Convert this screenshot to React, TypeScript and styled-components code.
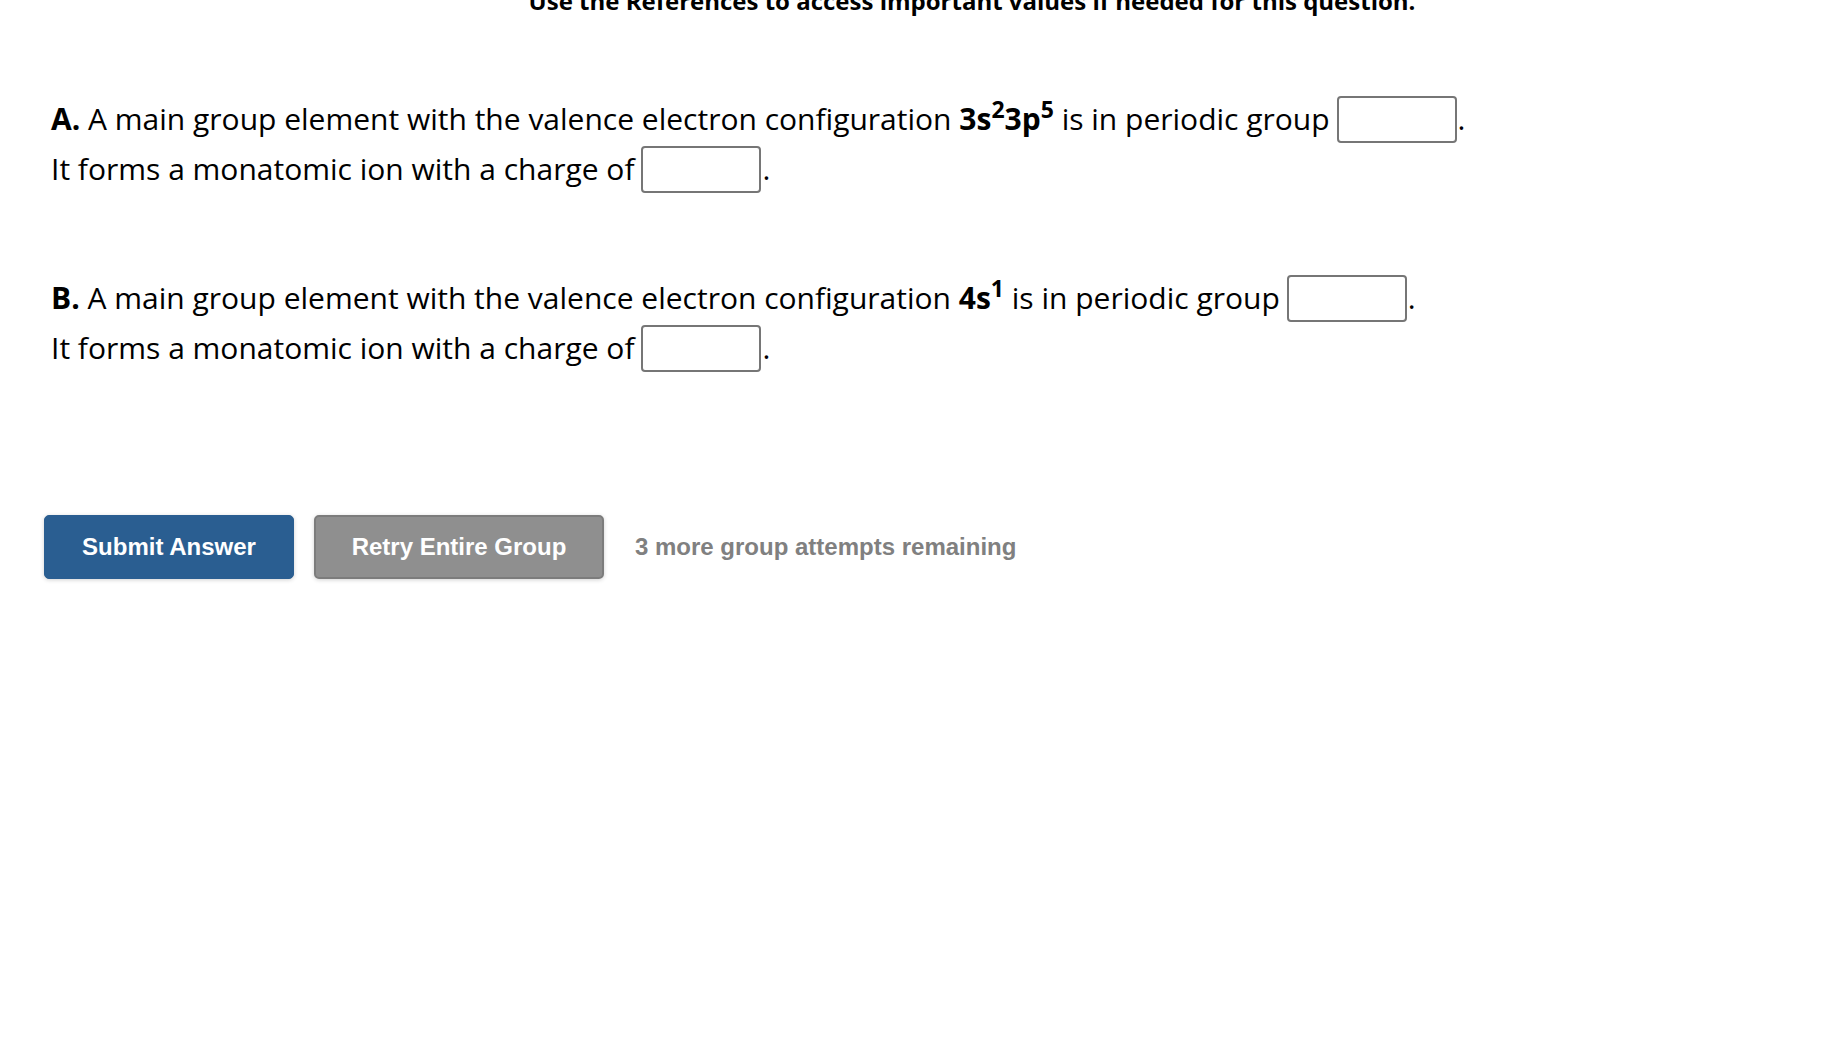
import styled, { createGlobalStyle } from "styled-components";

const GlobalStyle = createGlobalStyle`
  html, body {
    margin: 0;
    padding: 0;
    background: #ffffff;
  }
  body {
    font-family: "Open Sans", "Liberation Sans", sans-serif;
    color: #000000;
    overflow: hidden;
  }
`;

const Page = styled.div`
  width: 1842px;
  height: 1046px;
  overflow: hidden;
`;

const Notice = styled.div`
  margin: -14px 0 0 0;
  padding-left: 102px;
  text-align: center;
  font-weight: 700;
  font-size: 24px;
  line-height: 30px;
`;

const Question = styled.p<{ $gap: number }>`
  margin: ${(p) => p.$gap}px 0 0 0;
  padding-left: 51px;
  font-size: 30px;
  line-height: 50px;
`;

const Label = styled.b`
  font-weight: 700;
`;

const Formula = styled.b`
  font-weight: 700;
`;

const Sup = styled.sup`
  font-size: 23px;
  line-height: 0;
  vertical-align: 12px;
`;

const Blank = styled.input.attrs({ type: "text" })`
  display: inline-block;
  box-sizing: border-box;
  width: 120px;
  height: 47px;
  margin: -5px 1px 0 7px;
  padding: 0 8px;
  border: 2px solid #767676;
  border-radius: 4px;
  background: #ffffff;
  vertical-align: middle;
  font-size: 24px;
  outline: none;
`;

const Actions = styled.div`
  display: flex;
  align-items: center;
  gap: 20px;
  margin-top: 142px;
  padding-left: 44px;
`;

const Button = styled.button<{ $tone: "primary" | "muted" }>`
  box-sizing: border-box;
  height: 64px;
  padding: 0;
  width: ${(p) => (p.$tone === "primary" ? 250 : 290)}px;
  border-radius: 5px;
  border: ${(p) =>
    p.$tone === "primary" ? "1px solid #2a5e91" : "2px solid #7c7c7c"};
  background: ${(p) => (p.$tone === "primary" ? "#2a5e91" : "#8f8f8f")};
  color: #ffffff;
  font-family: "Liberation Sans", Arial, sans-serif;
  font-weight: 700;
  font-size: 24px;
  box-shadow: 0 1px 4px rgba(0, 0, 0, 0.18);
  cursor: pointer;
`;

const Attempts = styled.span`
  margin-left: 11px;
  font-family: "Liberation Sans", Arial, sans-serif;
  font-weight: 700;
  font-size: 24px;
  color: #808080;
`;

export default function App() {
  return (
    <Page>
      <GlobalStyle />
      <Notice>
        Use the References to access important values if needed for this
        question.
      </Notice>

      <Question $gap={78}>
        <Label>A.</Label> A main group element with the valence electron
        configuration{" "}
        <Formula>
          3s<Sup>2</Sup>3p<Sup>5</Sup>
        </Formula>{" "}
        is in periodic group
        <Blank />.
        <br />
        It forms a monatomic ion with a charge of
        <Blank />.
      </Question>

      <Question $gap={79}>
        <Label>B.</Label> A main group element with the valence electron
        configuration{" "}
        <Formula>
          4s<Sup>1</Sup>
        </Formula>{" "}
        is in periodic group
        <Blank />.
        <br />
        It forms a monatomic ion with a charge of
        <Blank />.
      </Question>

      <Actions>
        <Button $tone="primary">Submit Answer</Button>
        <Button $tone="muted">Retry Entire Group</Button>
        <Attempts>3 more group attempts remaining</Attempts>
      </Actions>
    </Page>
  );
}
